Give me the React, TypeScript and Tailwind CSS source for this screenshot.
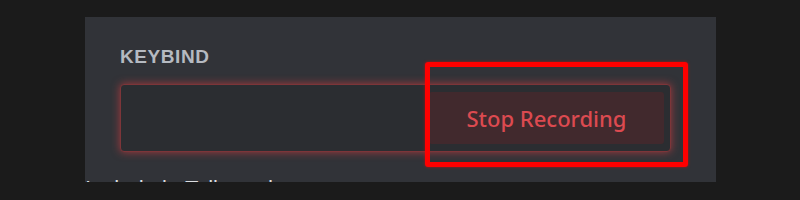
export default function App() {
  return (
    <div className="relative h-[200px] w-[800px] overflow-hidden bg-[#1b1b1b] pt-[17px] pl-[85px] font-['Liberation_Sans',sans-serif]">
      <div className="h-[165px] w-[631px] overflow-hidden bg-[#313338] pl-[35px] pt-[28px]">
        <h2 className="text-[19px] leading-[24px] font-bold tracking-[0.03em] text-[#b5bac1]">KEYBIND</h2>
        <div className="mt-[15px] flex h-[68px] w-[551px] items-center justify-end rounded-[4px] border border-[#7d3539] bg-[#2b2d31] pr-[6px] shadow-[0_0_8px_rgba(242,63,67,0.6)]">
          <button className="flex h-[52px] w-[235px] items-center justify-center rounded-[3px] bg-[#41292d] font-['Noto_Sans',sans-serif] text-[22px] font-medium text-[#dc4a50]">
            Stop Recording
          </button>
        </div>
        <p className="-ml-[35px] mt-[23px] text-[22px] leading-[28px] text-[#dbdee1]">Include in Talk mode</p>
      </div>
      <div className="pointer-events-none absolute left-[425px] top-[62px] h-[105px] w-[263px] rounded-[3px] border-[5px] border-[#ff0000] shadow-[0_0_3px_rgba(255,0,0,0.6)]" />
    </div>
  );
}
